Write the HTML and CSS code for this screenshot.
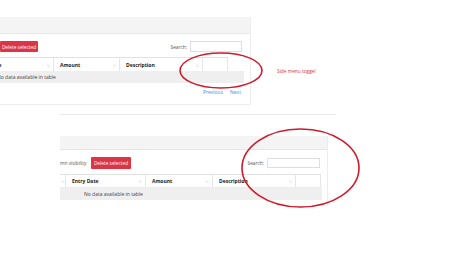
FILE: index.html
```html
<!DOCTYPE html>
<html lang="en">
<head>
    <meta charset="UTF-8">
    <title>Datatable notes</title>
    <link rel="stylesheet" href="styles.css">
</head>
<body>
    <div class="canvas">

        <!-- First screenshot -->
        <div class="shot shot-one">
            <div class="card-head"></div>
            <div class="toolbar">
                <div class="tools">
                    <button class="btn-danger">Delete selected</button>
                </div>
                <label class="search">Search: <span class="search-input"></span></label>
            </div>
            <div class="dt">
                <div class="dt-head">
                    <div class="th"><span>Entry Date</span><span class="sort">↑↓</span></div>
                    <div class="th"><span>Amount</span><span class="sort">↑↓</span></div>
                    <div class="th"><span>Description</span><span class="sort">↑↓</span></div>
                    <div class="th"></div>
                </div>
                <div class="dt-empty">No data available in table</div>
            </div>
            <div class="pager">
                <span class="page-link">Previous</span>
                <span class="page-link">Next</span>
            </div>
        </div>

        <!-- Second screenshot -->
        <div class="shot-line"></div>
        <div class="shot shot-two">
            <div class="card-head"></div>
            <div class="toolbar">
                <div class="tools">
                    <span class="btn-plain">mn visibility</span>
                    <button class="btn-danger">Delete selected</button>
                </div>
                <label class="search">Search: <span class="search-input"></span></label>
            </div>
            <div class="dt">
                <div class="dt-head">
                    <div class="th"><span></span><span class="sort">↑↓</span></div>
                    <div class="th"><span>Entry Date</span><span class="sort">↑↓</span></div>
                    <div class="th"><span>Amount</span><span class="sort">↑↓</span></div>
                    <div class="th"><span>Description</span><span class="sort">↑↓</span></div>
                    <div class="th"></div>
                </div>
                <div class="dt-empty">No data available in table</div>
            </div>
        </div>

        <!-- Annotations -->
        <svg class="marks" width="474" height="263" viewBox="0 0 474 263">
            <ellipse cx="221" cy="70.5" rx="41" ry="17.5" />
            <ellipse cx="300.5" cy="168" rx="58.5" ry="39" />
        </svg>
        <div class="note">Side menu toggel</div>
    </div>
</body>
</html>
```

FILE: styles.css
```css
body {
    margin: 0;
    background-color: #fff;
    font-family: "Open Sans", "Liberation Sans", sans-serif;
    color: #333;
}

.canvas {
    position: relative;
    width: 474px;
    height: 263px;
    overflow: hidden;
}

.shot {
    position: absolute;
    overflow: hidden;
    display: flex;
    flex-direction: column;
}

.shot-one {
    left: 0;
    top: 17px;
    width: 250px;
    height: 87px;
    border-right: 1px solid #ededed;
    border-bottom: 1px solid #ededed;
}

.shot-two {
    left: 60px;
    top: 136px;
    width: 267px;
    height: 70px;
    border-right: 1px solid #ededed;
}

.shot-line {
    position: absolute;
    left: 60px;
    top: 114px;
    width: 276px;
    height: 1px;
    background-color: #e8e8e8;
}

.card-head {
    height: 16px;
    background-color: #f4f4f4;
    border-bottom: 1px solid #e6e6e6;
    flex-shrink: 0;
}

.shot-two .card-head {
    height: 13px;
}

/* toolbar: buttons left, search right */
.toolbar {
    display: flex;
    justify-content: space-between;
    align-items: center;
    margin-top: 7px;
    height: 11px;
    padding-right: 8px;
}

.shot-two .toolbar {
    height: 12px;
    padding-right: 7px;
}

.tools {
    display: flex;
    align-items: center;
    height: 100%;
}

.btn-danger {
    height: 100%;
    width: 38px;
    padding: 0;
    border: none;
    border-radius: 1px;
    background-color: #dc3545;
    color: #fff;
    font-family: inherit;
    font-size: 4.8px;
    white-space: nowrap;
}

.shot-two .btn-danger {
    width: 40px;
    margin-left: 6px;
}

.btn-plain {
    width: 25px;
    font-size: 4.8px;
    color: #555;
    white-space: nowrap;
}

.search {
    display: flex;
    align-items: center;
    gap: 3px;
    font-size: 4.8px;
    color: #555;
    height: 100%;
    white-space: nowrap;
}

.search-input {
    width: 52px;
    height: 100%;
    box-sizing: border-box;
    border: 1px solid #dedede;
    background-color: #fff;
}

.shot-two .search-input {
    width: 53px;
    height: 10px;
}

/* table */
.dt {
    margin-top: 5px;
}

.dt-head {
    display: grid;
    height: 14px;
    border-top: 1px solid #e2e2e2;
    box-sizing: border-box;
}

.shot-one .dt {
    margin-left: -28px;
}

.shot-one .dt-head {
    width: 256px;
    grid-template-columns: 82px 66px 83px 25px;
}

.shot-one .th:first-child {
    padding-left: 3px;
}

.shot-two .dt-head {
    width: 261px;
    grid-template-columns: 6px 80px 67px 83px 25px;
    border-bottom: 1px solid #ececec;
}

.th {
    display: flex;
    justify-content: space-between;
    align-items: center;
    padding: 0 4px 0 6px;
    border-right: 1px solid #e6e6e6;
    font-size: 5px;
    font-weight: bold;
    color: #222;
    min-width: 0;
    white-space: nowrap;
}

.shot-two .th:first-child {
    padding: 0 1px;
}

.sort {
    font-weight: normal;
    font-size: 4.5px;
    letter-spacing: -1px;
    color: #b5b5b5;
}

.dt-empty {
    height: 12px;
    display: flex;
    align-items: center;
    background-color: #efefef;
    font-size: 5px;
    color: #444;
    white-space: nowrap;
}

.shot-one .dt-empty {
    width: 272px;
    padding-left: 25px;
    box-sizing: border-box;
}

.shot-two .dt-empty {
    width: 262px;
    padding-left: 24px;
    box-sizing: border-box;
}

.pager {
    display: flex;
    justify-content: flex-end;
    gap: 7px;
    margin-top: 5px;
    padding-right: 9px;
    height: 8px;
    align-items: center;
}

.page-link {
    font-size: 5px;
    color: #3d8fe0;
}

/* annotations */
.marks {
    position: absolute;
    left: 0;
    top: 0;
    pointer-events: none;
}

.marks ellipse {
    fill: none;
    stroke: #cf1a2c;
    stroke-width: 1.6;
}

.note {
    position: absolute;
    left: 277px;
    top: 68px;
    font-size: 4.8px;
    color: #e0303d;
}
```
